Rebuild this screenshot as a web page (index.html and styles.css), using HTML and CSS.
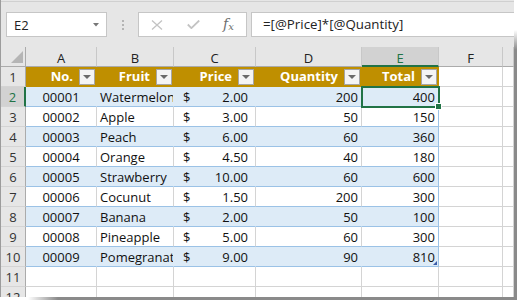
FILE: index.html
```html
<!DOCTYPE html>
<html lang="en">
<head>
  <meta charset="UTF-8" />
  <title>Fruit table</title>
  <link rel="stylesheet" href="styles.css">
</head>
<body>
  <div class="app">
    <!-- formula bar -->
    <div class="formula-bar">
      <div class="name-box">
        <span>E2</span>
        <svg width="6" height="4" viewBox="0 0 6 4"><path d="M0 0h6L3 3.5z" fill="#777"/></svg>
      </div>
      <div class="grip"><i></i><i></i><i></i></div>
      <div class="fx-buttons">
        <svg class="btn-x" width="12" height="10" viewBox="0 0 12 10"><path d="M1 0.5l10 9M11 0.5l-10 9" stroke="#c3c3c3" stroke-width="1.3" fill="none"/></svg>
        <svg class="btn-ok" width="13" height="9" viewBox="0 0 13 9"><path d="M0.8 4.5l3.6 3.6 7.8-7.6" stroke="#c3c3c3" stroke-width="1.8" fill="none"/></svg>
        <span class="fx">f<sub>x</sub></span>
      </div>
      <div class="formula-input">=[@Price]*[@Quantity]</div>
    </div>

    <!-- sheet -->
    <div class="sheet">
      <div class="corner"><svg width="12" height="12" viewBox="0 0 12 12"><path d="M12 0v12H0z" fill="#b5b5b5"/></svg></div>
      <div class="ch">A</div>
      <div class="ch">B</div>
      <div class="ch">C</div>
      <div class="ch">D</div>
      <div class="ch ch-sel">E</div>
      <div class="ch">F</div>
      <div class="ch"></div>

      <div class="rh">1</div>
      <div class="c th"><span>No.</span><b class="dd"></b></div>
      <div class="c th"><span>Fruit</span><b class="dd"></b></div>
      <div class="c th"><span>Price</span><b class="dd"></b></div>
      <div class="c th"><span>Quantity</span><b class="dd"></b></div>
      <div class="c th last"><span>Total</span><b class="dd"></b></div>
      <div class="c"></div>
      <div class="c"></div>

      <div class="rh rh-sel">2</div>
      <div class="c band id">00001</div>
      <div class="c band name">Watermelon</div>
      <div class="c band money"><span>$</span><span>2.00</span></div>
      <div class="c band num">200</div>
      <div class="c band num last sel">400</div>
      <div class="c"></div>
      <div class="c"></div>

      <div class="rh">3</div>
      <div class="c row id">00002</div>
      <div class="c row name">Apple</div>
      <div class="c row money"><span>$</span><span>3.00</span></div>
      <div class="c row num">50</div>
      <div class="c row num last">150</div>
      <div class="c"></div>
      <div class="c"></div>

      <div class="rh">4</div>
      <div class="c band id">00003</div>
      <div class="c band name">Peach</div>
      <div class="c band money"><span>$</span><span>6.00</span></div>
      <div class="c band num">60</div>
      <div class="c band num last">360</div>
      <div class="c"></div>
      <div class="c"></div>

      <div class="rh">5</div>
      <div class="c row id">00004</div>
      <div class="c row name">Orange</div>
      <div class="c row money"><span>$</span><span>4.50</span></div>
      <div class="c row num">40</div>
      <div class="c row num last">180</div>
      <div class="c"></div>
      <div class="c"></div>

      <div class="rh">6</div>
      <div class="c band id">00005</div>
      <div class="c band name">Strawberry</div>
      <div class="c band money"><span>$</span><span>10.00</span></div>
      <div class="c band num">60</div>
      <div class="c band num last">600</div>
      <div class="c"></div>
      <div class="c"></div>

      <div class="rh">7</div>
      <div class="c row id">00006</div>
      <div class="c row name">Cocunut</div>
      <div class="c row money"><span>$</span><span>1.50</span></div>
      <div class="c row num">200</div>
      <div class="c row num last">300</div>
      <div class="c"></div>
      <div class="c"></div>

      <div class="rh">8</div>
      <div class="c band id">00007</div>
      <div class="c band name">Banana</div>
      <div class="c band money"><span>$</span><span>2.00</span></div>
      <div class="c band num">50</div>
      <div class="c band num last">100</div>
      <div class="c"></div>
      <div class="c"></div>

      <div class="rh">9</div>
      <div class="c row id">00008</div>
      <div class="c row name">Pineapple</div>
      <div class="c row money"><span>$</span><span>5.00</span></div>
      <div class="c row num">60</div>
      <div class="c row num last">300</div>
      <div class="c"></div>
      <div class="c"></div>

      <div class="rh">10</div>
      <div class="c band id">00009</div>
      <div class="c band name">Pomegranate</div>
      <div class="c band money"><span>$</span><span>9.00</span></div>
      <div class="c band num">90</div>
      <div class="c band num last resize">810</div>
      <div class="c"></div>
      <div class="c"></div>

      <div class="rh">11</div>
      <div class="c"></div><div class="c"></div><div class="c"></div>
      <div class="c"></div><div class="c"></div><div class="c"></div><div class="c"></div>

      <div class="rh">12</div>
      <div class="c"></div><div class="c"></div><div class="c"></div>
      <div class="c"></div><div class="c"></div><div class="c"></div><div class="c"></div>
    </div>
  </div>
</body>
</html>
```

FILE: styles.css
```css
body {
  margin: 0;
  width: 517px;
  height: 300px;
  overflow: hidden;
  position: relative;
  background: #ffffff;
  font-family: "Open Sans", sans-serif;
  color: #222222;
}

/* screenshot drop shadow */
body::before {
  content: "";
  position: absolute;
  left: 514px;
  top: 30px;
  width: 3px;
  height: 270px;
  background: linear-gradient(to bottom, rgba(138, 138, 138, 0), #8a8a8a 20px);
}

body::after {
  content: "";
  position: absolute;
  left: 28px;
  top: 297px;
  width: 489px;
  height: 3px;
  background: linear-gradient(to right, rgba(138, 138, 138, 0), #8a8a8a 30px);
}

.app {
  width: 514px;
  height: 297px;
  overflow: hidden;
  border-left: 1px solid #9c9c9c;
  box-sizing: border-box;
  background: #e6e6e6;
}

/* Formula bar */
.formula-bar {
  display: flex;
  align-items: flex-start;
  height: 46px;
  margin-top: 1px;
  border-top: 1px solid #d0d0d0;
  padding: 10px 0 0 5px;
  box-sizing: border-box;
}

.name-box {
  width: 101px;
  height: 25px;
  box-sizing: border-box;
  border: 1px solid #c6c6c6;
  background: #ffffff;
  display: flex;
  align-items: center;
  justify-content: space-between;
  padding: 0 7px 0 7px;
  font-size: 13px;
}

.grip {
  width: 31px;
  height: 25px;
  display: flex;
  flex-direction: column;
  align-items: center;
  justify-content: center;
  gap: 2px;
}

.grip i {
  width: 2px;
  height: 2px;
  background: #b4b4b4;
}

.fx-buttons {
  width: 109px;
  height: 25px;
  box-sizing: border-box;
  border: 1px solid #c6c6c6;
  background: #ffffff;
  display: flex;
  align-items: center;
  padding-left: 12px;
}

.btn-ok {
  margin-left: 24px;
}

.fx {
  margin-left: 23px;
  font-family: "DejaVu Serif", "Liberation Serif", serif;
  font-style: italic;
  font-size: 14px;
  color: #6e6e6e;
  line-height: 1;
}

.fx sub {
  font-size: 10px;
  vertical-align: -1px;
}

.formula-input {
  flex: 1;
  height: 25px;
  margin-left: 4px;
  box-sizing: border-box;
  border: 1px solid #c6c6c6;
  border-right: none;
  background: #ffffff;
  padding-left: 11px;
  font-size: 13.3px;
  line-height: 22px;
  white-space: nowrap;
}

/* Sheet grid */
.sheet {
  display: grid;
  grid-template-columns: 25px 71px 77px 82px 106px 77px 64px 1fr;
  grid-auto-rows: 20px;
  background: #ffffff;
  font-size: 13px;
}

.corner {
  background: #e6e6e6;
  border-right: 1px solid #ababab;
  border-bottom: 1px solid #ababab;
  display: flex;
  align-items: flex-end;
  justify-content: flex-end;
  padding: 0 2px 3px 0;
}

.ch {
  background: #e6e6e6;
  border-right: 1px solid #c8c8c8;
  border-bottom: 1px solid #ababab;
  text-align: center;
  line-height: 22px;
  color: #222222;
}

.ch-sel {
  background: #d2d2d2;
  color: #217346;
  border-bottom: 2px solid #217346;
}

.rh {
  background: #e6e6e6;
  border-right: 1px solid #ababab;
  border-bottom: 1px solid #d4d4d4;
  text-align: center;
  line-height: 21px;
  color: #333333;
}

.rh-sel {
  background: #d2d2d2;
  color: #217346;
  border-right: 2px solid #217346;
}

.c {
  border-right: 1px solid #d4d4d4;
  border-bottom: 1px solid #d4d4d4;
  line-height: 21px;
  white-space: nowrap;
  overflow: hidden;
  color: #111111;
}

.th {
  background: #bf8f00;
  border-right-color: #bf8f00;
  border-bottom-color: #bf8f00;
  color: #ffffff;
  font-weight: 700;
  display: flex;
  align-items: center;
  justify-content: flex-end;
  padding-right: 1px;
}

.dd {
  width: 16px;
  height: 16px;
  margin-left: 6px;
  box-sizing: border-box;
  border: 1px solid #a6a6a6;
  background: #f4f4f4;
  display: flex;
  align-items: center;
  justify-content: center;
}

.dd::after {
  content: "";
  border-left: 4px solid transparent;
  border-right: 4px solid transparent;
  border-top: 4px solid #6a6a6a;
  margin-top: 1px;
}

.band {
  background: #ddebf7;
  border-right-color: #ddebf7;
  border-bottom-color: #9bc2e6;
}

.row {
  border-bottom-color: #9bc2e6;
}

.last {
  border-right-color: #9bc2e6;
}

.th.last {
  border-right-color: #bf8f00;
}

.id {
  text-align: center;
}

.name {
  padding-left: 3px;
}

.money {
  display: flex;
  justify-content: space-between;
  padding: 0 7px 0 9px;
}

.num {
  text-align: right;
  padding-right: 3px;
}

.sel {
  position: relative;
  overflow: visible;
  outline: 2px solid #217346;
  outline-offset: -1px;
  z-index: 1;
}

.sel::after {
  content: "";
  position: absolute;
  right: -4px;
  bottom: -4px;
  width: 5px;
  height: 5px;
  background: #217346;
  border: 1px solid #ffffff;
}

.resize {
  position: relative;
}

.resize::after {
  content: "";
  position: absolute;
  right: 1px;
  bottom: 1px;
  border-left: 4px solid transparent;
  border-bottom: 4px solid #3a5ba8;
}
```
